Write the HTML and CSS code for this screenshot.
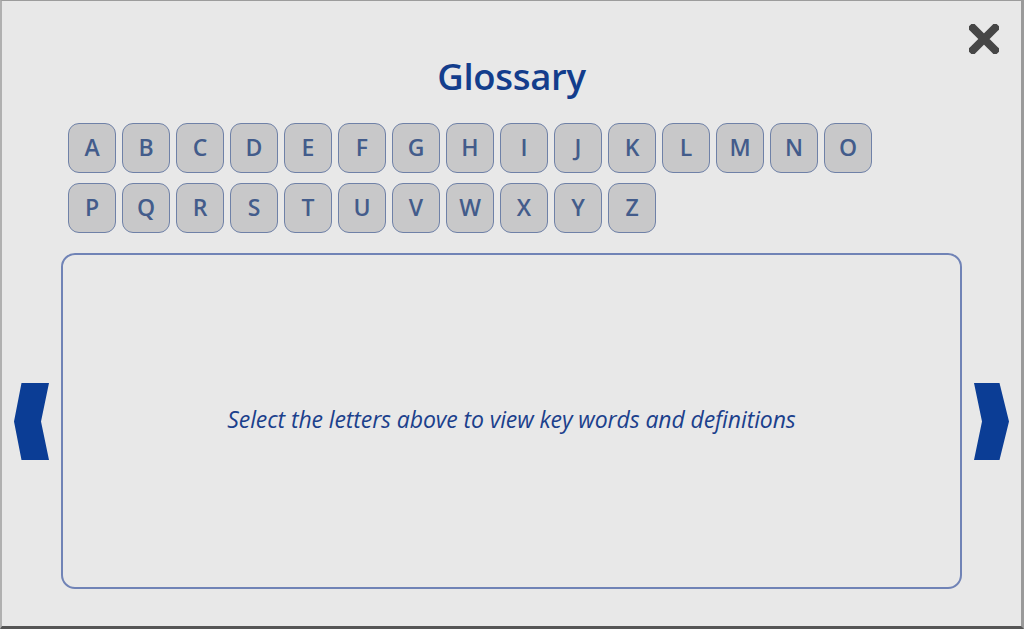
FILE: index.html
```html
<!DOCTYPE html>
<html>
<head>
<meta charset="utf-8">
<link rel="stylesheet" href="styles.css">
</head>
<body>
<div class="frame">
  <button class="close" aria-label="Close">
    <svg width="30" height="30" viewBox="0 0 30 30"><path d="M4 4 L26 26 M26 4 L4 26" stroke="#464646" stroke-width="8" stroke-linecap="square" fill="none"/></svg>
  </button>
  <h1 class="title">Glossary</h1>
  <div class="letters">
    <span class="key">A</span><span class="key">B</span><span class="key">C</span><span class="key">D</span><span class="key">E</span><span class="key">F</span><span class="key">G</span><span class="key">H</span><span class="key">I</span><span class="key">J</span><span class="key">K</span><span class="key">L</span><span class="key">M</span><span class="key">N</span><span class="key">O</span>
    <span class="key">P</span><span class="key">Q</span><span class="key">R</span><span class="key">S</span><span class="key">T</span><span class="key">U</span><span class="key">V</span><span class="key">W</span><span class="key">X</span><span class="key">Y</span><span class="key">Z</span>
  </div>
  <div class="content-row">
    <svg class="arrow" width="35" height="77" viewBox="0 0 35 77"><polygon points="35,0 7.5,0 0,38.5 7.5,77 35,77 27,38.5" fill="#0b3d95"/></svg>
    <div class="panel">
      <p class="hint">Select the letters above to view key words and definitions</p>
    </div>
    <svg class="arrow" width="35" height="77" viewBox="0 0 35 77"><polygon points="0,0 25.5,0 35,38.5 25.5,77 0,77 8,38.5" fill="#0b3d95"/></svg>
  </div>
</div>
</body>
</html>
```
FILE: styles.css
```css
html, body {
  margin: 0;
  padding: 0;
  background: #e8e8e8;
}
.frame {
  position: relative;
  box-sizing: border-box;
  width: 1024px;
  height: 629px;
  background: #e8e8e8;
  border-top: 1px solid #9c9c9c;
  border-left: 2px solid #b0b0b0;
  border-right: 3px solid #9a9a9a;
  border-bottom: 3px solid #555555;
  display: flex;
  flex-direction: column;
  font-family: "Open Sans", "DejaVu Sans", sans-serif;
}
.close {
  position: absolute;
  top: 23px;
  right: 22px;
  width: 30px;
  height: 30px;
  padding: 0;
  border: 0;
  background: none;
  display: block;
}
.close svg { display: block; }
.title {
  margin: 53px 0 0;
  height: 44px;
  line-height: 44px;
  text-align: center;
  font-size: 36.5px;
  font-weight: 600;
  color: #133d8c;
  letter-spacing: -0.3px;
}
.letters {
  margin: 25px 0 0 66px;
  display: grid;
  grid-template-columns: repeat(15, 48px);
  grid-auto-rows: 50px;
  column-gap: 6px;
  row-gap: 10px;
}
.key {
  box-sizing: border-box;
  width: 48px;
  height: 50px;
  padding-bottom: 3px;
  border: 1.5px solid #6f81a7;
  border-radius: 11px;
  background: #c8c8c9;
  color: #435c8b;
  font-size: 23px;
  font-weight: 600;
  display: flex;
  align-items: center;
  justify-content: center;
}
.content-row {
  margin-top: 20px;
  padding-left: 12px;
  display: flex;
  align-items: center;
  gap: 12px;
}
.arrow { display: block; flex: none; }
.panel {
  box-sizing: border-box;
  width: 901px;
  height: 336px;
  border: 2px solid #7083b6;
  border-radius: 14px;
  display: flex;
  align-items: center;
  justify-content: center;
}
.hint {
  margin: 0 0 4px;
  font-size: 23px;
  font-style: italic;
  color: #1b408c;
  letter-spacing: -0.1px;
}
```
